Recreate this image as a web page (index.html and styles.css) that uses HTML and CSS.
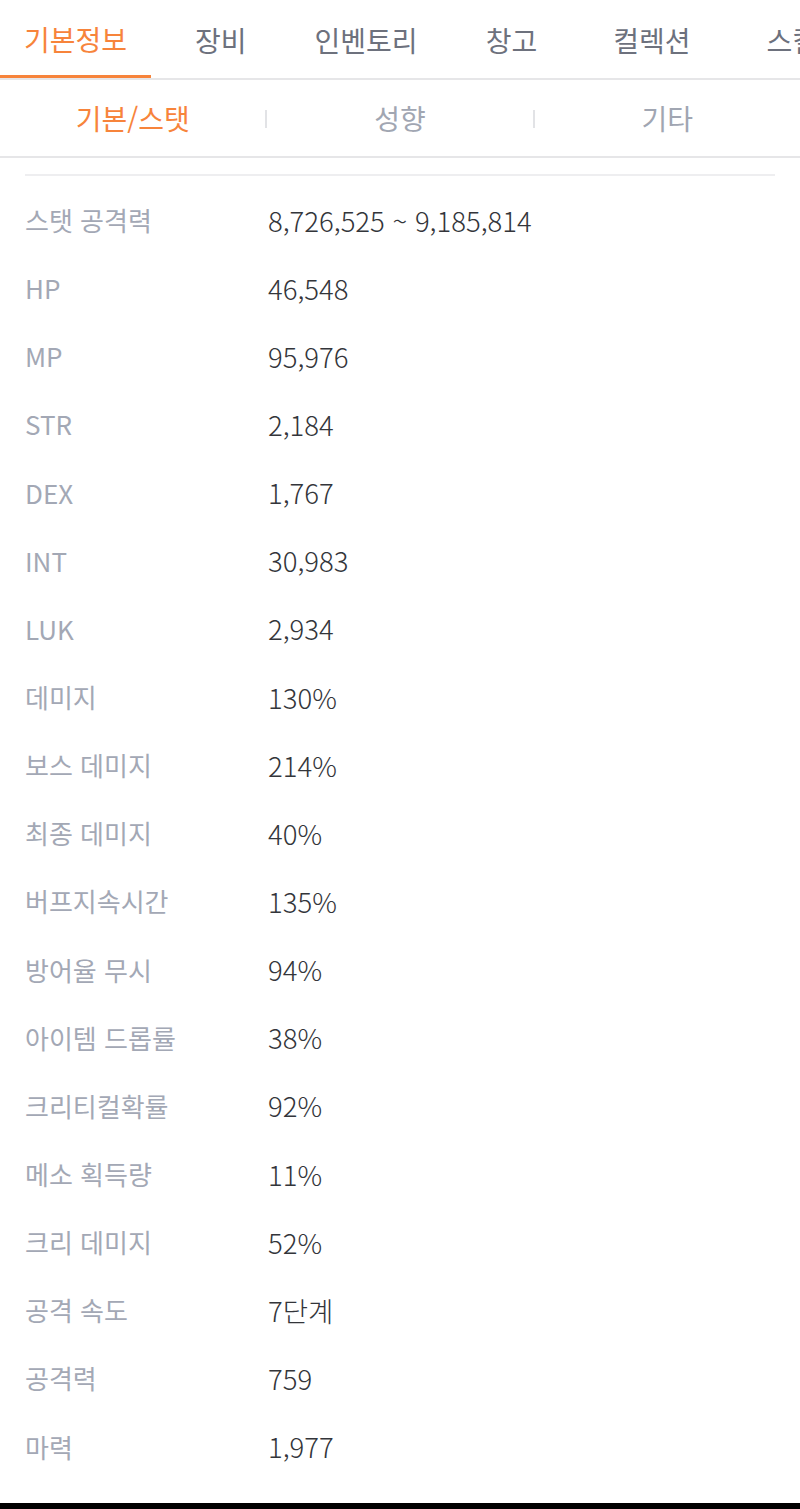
FILE: index.html
```html
<!DOCTYPE html>
<html lang="ko">
<head>
<meta charset="utf-8">
<link rel="stylesheet" href="styles.css">
</head>
<body>
<div class="page">
  <nav class="tabs">
    <div class="tab active">기본정보</div>
    <div class="tab">장비</div>
    <div class="tab">인벤토리</div>
    <div class="tab">창고</div>
    <div class="tab tab-wide">컬렉션</div>
    <div class="tab tab-wide">스킬</div>
  </nav>
  <div class="subtabs">
    <div class="subtab active">기본/스탯</div>
    <div class="sep"></div>
    <div class="subtab">성향</div>
    <div class="sep"></div>
    <div class="subtab">기타</div>
  </div>
  <div class="content">
    <div class="stats">
      <div class="row"><span class="label">스탯 공격력</span><span class="value">8,726,525 ~ 9,185,814</span></div>
      <div class="row"><span class="label">HP</span><span class="value">46,548</span></div>
      <div class="row"><span class="label">MP</span><span class="value">95,976</span></div>
      <div class="row"><span class="label">STR</span><span class="value">2,184</span></div>
      <div class="row"><span class="label">DEX</span><span class="value">1,767</span></div>
      <div class="row"><span class="label">INT</span><span class="value">30,983</span></div>
      <div class="row"><span class="label">LUK</span><span class="value">2,934</span></div>
      <div class="row"><span class="label">데미지</span><span class="value">130%</span></div>
      <div class="row"><span class="label">보스 데미지</span><span class="value">214%</span></div>
      <div class="row"><span class="label">최종 데미지</span><span class="value">40%</span></div>
      <div class="row"><span class="label">버프지속시간</span><span class="value">135%</span></div>
      <div class="row"><span class="label">방어율 무시</span><span class="value">94%</span></div>
      <div class="row"><span class="label">아이템 드롭률</span><span class="value">38%</span></div>
      <div class="row"><span class="label">크리티컬확률</span><span class="value">92%</span></div>
      <div class="row"><span class="label">메소 획득량</span><span class="value">11%</span></div>
      <div class="row"><span class="label">크리 데미지</span><span class="value">52%</span></div>
      <div class="row"><span class="label">공격 속도</span><span class="value">7단계</span></div>
      <div class="row"><span class="label">공격력</span><span class="value">759</span></div>
      <div class="row"><span class="label">마력</span><span class="value">1,977</span></div>
    </div>
  </div>
  <div class="bottombar"></div>
</div>
</body>
</html>
```
FILE: styles.css
```css
html, body {
  margin: 0;
  padding: 0;
  background: #fff;
}
body {
  font-family: "Noto Sans CJK KR", "Noto Sans", sans-serif;
  width: 800px;
  height: 1509px;
  overflow: hidden;
}
.page {
  display: flex;
  flex-direction: column;
  height: 1509px;
}
.tabs {
  display: flex;
  gap: 20px;
  height: 78px;
  border-bottom: 2px solid #e6e6e8;
  white-space: nowrap;
  overflow: hidden;
  flex-shrink: 0;
}
.tab {
  padding: 0 24px;
  font-size: 28px;
  line-height: 80px;
  color: #6d717d;
  height: 78px;
  box-sizing: border-box;
  flex-shrink: 0;
}
.tab-wide {
  margin-left: 8px;
}
.tab.active {
  color: #f7843b;
  border-bottom: 5px solid #f7843b;
  height: 80px;
  line-height: 78px;
  margin-bottom: -2px;
}
.subtabs {
  display: flex;
  align-items: center;
  height: 76px;
  border-bottom: 2px solid #e6e6e8;
  flex-shrink: 0;
}
.subtab {
  flex: 1;
  text-align: center;
  font-size: 28px;
  color: #a1a6b2;
  line-height: 76px;
}
.subtab.active {
  color: #f7843b;
}
.sep {
  width: 2px;
  height: 18px;
  background: #e2e3e6;
  margin-top: 2px;
}
.content {
  padding: 16px 25px 0;
  flex: 1;
}
.stats {
  border-top: 2px solid #eeeef0;
  padding-top: 9.5px;
}
.row {
  display: flex;
  align-items: center;
  height: 68.15px;
}
.label {
  width: 243px;
  font-size: 26px;
  color: #a3a8b5;
}
.value {
  font-size: 27.5px;
  font-weight: 300;
  color: #33353a;
}
.bottombar {
  height: 6px;
  background: #000;
  flex-shrink: 0;
}
```
